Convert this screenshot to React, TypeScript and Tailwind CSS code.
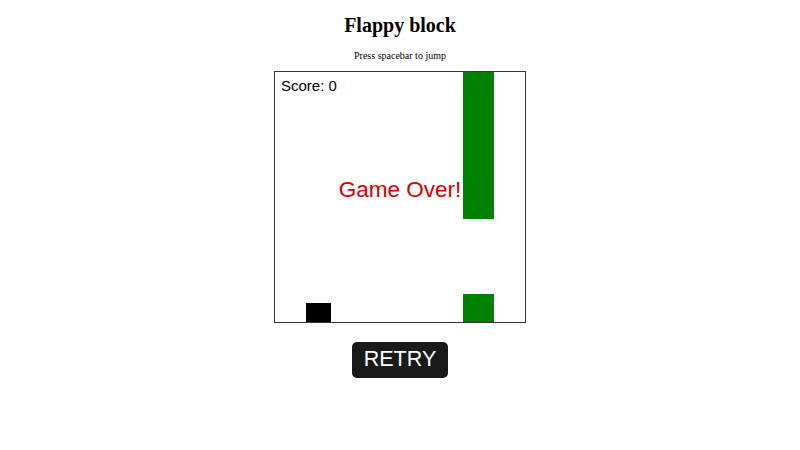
import { useState } from "react";

type Pipe = { x: number; gapTop: number; gapBottom: number };

const BOARD = 250;
const PIPE_W = 31;

export default function App() {
  const [score] = useState(0);
  const [over] = useState(true);
  const pipes: Pipe[] = [{ x: 188, gapTop: 147, gapBottom: 222 }];
  const player = { x: 31, y: 231, w: 25, h: 19 };

  return (
    <div className="min-h-screen w-full bg-white flex flex-col items-center pt-[14px]">
      <h1 className="font-['Liberation_Serif',serif] font-bold text-[20px] leading-[23px] text-black">
        Flappy block
      </h1>
      <p className="mt-[13px] font-['Liberation_Serif',serif] text-[10px] leading-[12px] text-black">
        Press spacebar to jump
      </p>

      {/* board: pipes and the player block sit on a free 250x250 canvas */}
      <div className="mt-[9px] border border-[#333] bg-white">
        <div className="relative w-[250px] h-[250px] overflow-hidden">
          {pipes.map((p, i) => (
            <div key={i}>
              <div
                className="absolute top-0 bg-[#008000]"
                style={{ left: p.x, width: PIPE_W, height: p.gapTop }}
              />
              <div
                className="absolute bg-[#008000]"
                style={{ left: p.x, width: PIPE_W, top: p.gapBottom, height: BOARD - p.gapBottom }}
              />
            </div>
          ))}
          <div
            className="absolute bg-black"
            style={{ left: player.x, top: player.y, width: player.w, height: player.h }}
          />
          <span className="absolute left-[6px] top-[5px] font-['Liberation_Sans',sans-serif] text-[15px] leading-[18px] text-black">
            Score: {score}
          </span>
          {over && (
            <span className="absolute left-0 right-0 top-[105px] text-center font-['Liberation_Sans',sans-serif] text-[22.5px] leading-[26px] text-[#d40000]">
              Game Over!
            </span>
          )}
        </div>
      </div>

      <button className="mt-[19px] h-[36px] w-[96px] rounded-[5px] bg-[#1a1a1a] font-['Liberation_Sans',sans-serif] text-[21.5px] leading-none text-white">
        RETRY
      </button>
    </div>
  );
}
